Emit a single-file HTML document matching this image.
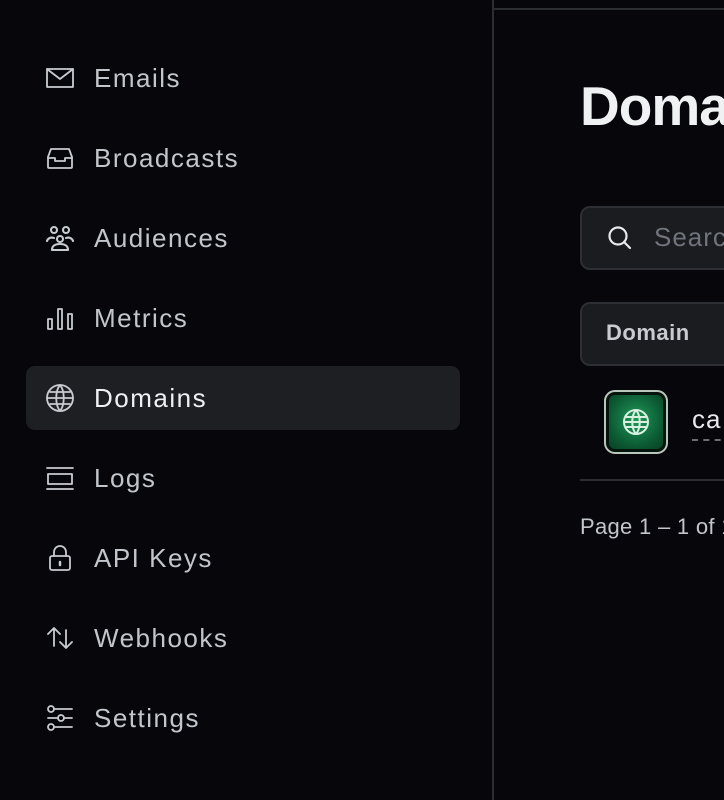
<!DOCTYPE html>
<html><head><meta charset="utf-8"><style>
*{margin:0;padding:0;box-sizing:border-box}
html,body{width:724px;height:800px;overflow:hidden;background:#07070b;font-family:"Liberation Sans",sans-serif}
.item{position:absolute;left:26px;width:434px;height:64px;border-radius:9px;display:flex;align-items:center;color:#c2c5cb;font-size:26px;letter-spacing:1.5px}
.item.act{background:#1e1f23;color:#eef0f2}
.item svg{position:absolute;left:18px;width:32px;height:32px;fill:none;stroke:#c8cbd0;stroke-width:1.8;stroke-linecap:round;stroke-linejoin:round}
.item span{position:absolute;left:68px}
#main{position:absolute;left:0;top:0;width:724px;height:800px;overflow:hidden}
</style></head><body>
<div style="position:absolute;left:492px;top:0;width:2px;height:800px;background:#2b2d31"></div>
<div style="position:absolute;left:493px;top:8px;width:231px;height:2px;background:#2b2d31"></div>

<div class="item" style="top:46px"><svg viewBox="0 0 32 32"><rect x="3" y="7" width="26" height="18"/><path d="M3 7l13 10 13-10"/></svg><span>Emails</span></div>
<div class="item" style="top:126px"><svg viewBox="0 0 32 32"><path d="M4 15l3-8h18l3 8v10a1 1 0 0 1-1 1H5a1 1 0 0 1-1-1z"/><path d="M4 16h7v3h10v-3h7"/></svg><span>Broadcasts</span></div>
<div class="item" style="top:206px"><svg viewBox="0 0 32 32" style="stroke-width:2.1"><circle cx="10" cy="8" r="3"/><circle cx="22" cy="8" r="3"/><circle cx="16" cy="17" r="3"/><path d="M3 19c1-3 4-4 7-3M29 19c-1-3-4-4-7-3M8 28c0-4 3-6 8-6s8 2 8 6z"/></svg><span>Audiences</span></div>
<div class="item" style="top:286px"><svg viewBox="0 0 32 32"><rect x="4" y="17" width="4" height="10"/><rect x="14" y="7" width="4" height="20"/><rect x="24" y="12" width="4" height="15"/></svg><span>Metrics</span></div>
<div class="item act" style="top:366px"><svg viewBox="0 0 32 32"><circle cx="16" cy="16" r="13"/><path d="M3 16h26M16 3c-5 6-5 20 0 26M16 3c5 6 5 20 0 26M6 10h20M6 22h20"/></svg><span>Domains</span></div>
<div class="item" style="top:446px"><svg viewBox="0 0 32 32"><path d="M3 6h26M3 27h26"/><rect x="4" y="12" width="24" height="10"/></svg><span>Logs</span></div>
<div class="item" style="top:526px"><svg viewBox="0 0 32 32"><rect x="6" y="14" width="20" height="14" rx="2"/><path d="M10 14V10a6 6 0 0 1 12 0v4"/><path d="M16 20v3" stroke-width="2.5"/></svg><span>API Keys</span></div>
<div class="item" style="top:606px"><svg viewBox="0 0 32 32"><path d="M10 24V6M4 12l6-6 6 6M22 8v18M16 20l6 6 6-6"/></svg><span>Webhooks</span></div>
<div class="item" style="top:686px"><svg viewBox="0 0 32 32"><path d="M11 7h17M4 16h10M20 16h8M11 25h17"/><circle cx="7" cy="7" r="3"/><circle cx="17" cy="16" r="3"/><circle cx="7" cy="25" r="3"/></svg><span>Settings</span></div>

<div id="main">
<div style="position:absolute;left:580px;top:74px;color:#f0f1f3;font-size:55px;font-weight:bold;white-space:nowrap;letter-spacing:-1px">Domains</div>

<div style="position:absolute;left:580px;top:206px;width:200px;height:64px;border:2px solid #2d2f34;border-radius:10px;background:#1b1c20"></div>
<svg style="position:absolute;left:606px;top:224px" width="28" height="28" viewBox="0 0 28 28" fill="none" stroke="#e8e9eb" stroke-width="2.2" stroke-linecap="round"><circle cx="12" cy="12" r="8.5"/><path d="M18 18l6 6"/></svg>
<div style="position:absolute;left:654px;top:222px;color:#6f737b;font-size:26px;letter-spacing:1px;white-space:nowrap">Search</div>

<div style="position:absolute;left:580px;top:302px;width:200px;height:64px;border:2px solid #2d2f34;border-radius:10px;background:#1b1c20"></div>
<div style="position:absolute;left:606px;top:320px;color:#c8cbd0;font-size:22px;font-weight:bold;letter-spacing:0.5px">Domain</div>

<div style="position:absolute;left:604px;top:390px;width:64px;height:64px;border-radius:11px;border:2px solid #b9c6bc;background:radial-gradient(circle at 50% 45%,#1f9a5a,#0c5a33 60%,#063a20);box-shadow:inset 0 0 0 3px #05140c"></div>
<svg style="position:absolute;left:620px;top:406px" width="32" height="32" viewBox="0 0 32 32" fill="none" stroke="#d8f0e0" stroke-width="2"><circle cx="16" cy="16" r="12"/><path d="M4 16h24M16 4c-5 6-5 18 0 24M16 4c5 6 5 18 0 24M6 11h20M6 21h20"/></svg>
<div style="position:absolute;left:692px;top:404px;color:#e8e9eb;font-size:26px;letter-spacing:1px">ca</div>
<div style="position:absolute;left:692px;top:439px;width:40px;border-top:2px dashed #6a6d73"></div>

<div style="position:absolute;left:580px;top:479px;width:144px;height:2px;background:#2b2d31"></div>
<div style="position:absolute;left:580px;top:514px;color:#c2c5cb;font-size:22px;white-space:nowrap;letter-spacing:0.3px">Page 1 – 1 of 1</div>
</div>
</body></html>
